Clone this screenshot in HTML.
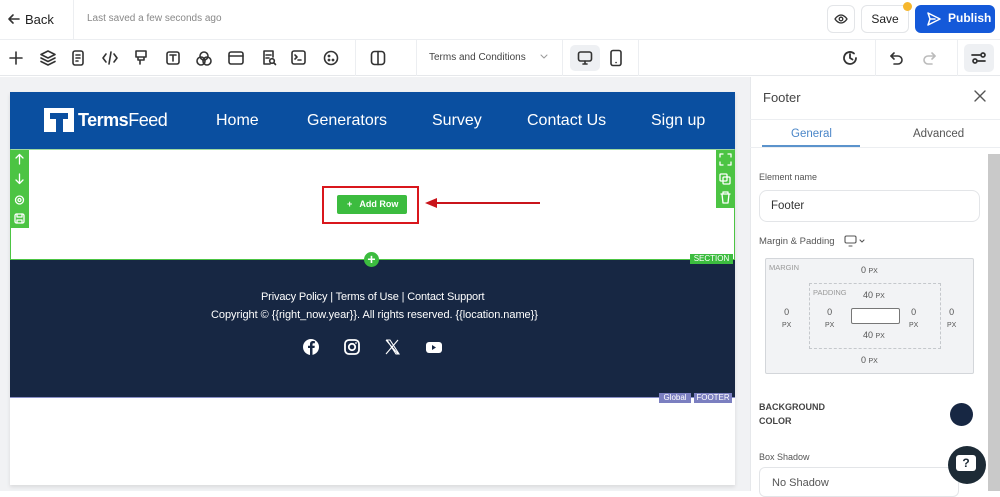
<!DOCTYPE html>
<html><head><meta charset="utf-8"><style>
*{box-sizing:border-box;margin:0;padding:0}
body{width:1000px;height:491px;overflow:hidden;font-family:"Liberation Sans",sans-serif;background:#fff;position:relative;color:#333}
.abs{position:absolute}
.ic{position:absolute;stroke:#333;fill:none;stroke-width:1.6;stroke-linecap:round;stroke-linejoin:round}
.w{stroke:#fff}
</style></head><body>
<!-- top bar -->
<div class="abs" style="left:0;top:0;width:1000px;height:40px;border-bottom:1px solid #eceef1"></div>
<svg class="ic" style="left:7px;top:12px" width="14" height="14" viewBox="0 0 14 14"><path d="M12 7H2M6 3L2 7l4 4"/></svg>
<div class="abs" style="left:25px;top:12px;font-size:13px;color:#222">Back</div>
<div class="abs" style="left:73px;top:0;width:1px;height:40px;background:#eceef1"></div>
<div class="abs" style="left:87px;top:13px;font-size:10px;color:#888">Last saved a few seconds ago</div>
<div class="abs" style="left:827px;top:5px;width:28px;height:28px;border:1px solid #e3e5e8;border-radius:6px"></div>
<svg class="ic" style="left:834px;top:12px;stroke-width:1.3" width="14" height="14" viewBox="0 0 14 14"><path d="M1 7s2.5-4 6-4 6 4 6 4-2.5 4-6 4-6-4-6-4z"/><circle cx="7" cy="7" r="1.8"/></svg>
<div class="abs" style="left:861px;top:5px;width:48px;height:28px;border:1px solid #e3e5e8;border-radius:6px;font-size:12px;text-align:center;line-height:27px;color:#222">Save</div>
<div class="abs" style="left:903px;top:2px;width:9px;height:9px;border-radius:50%;background:#f6b72d"></div>
<div class="abs" style="left:915px;top:5px;width:80px;height:28px;background:#1459d9;border-radius:6px;color:#fff;font-size:12px;font-weight:bold;line-height:27px;padding-left:33px">Publish</div>
<svg class="ic w" style="left:926px;top:11px;stroke-width:1.5" width="16" height="16" viewBox="0 0 16 16"><path d="M2 2l12 6-12 6 2-6zM4 8h5"/></svg>
<!-- toolbar -->
<div class="abs" style="left:0;top:40px;width:1000px;height:36px;border-bottom:1px solid #e6e8eb"></div>
<svg class="ic" style="left:0;top:48px" width="360" height="20" viewBox="0 0 360 20">
<path d="M16 4v12M10 10h12"/>
<path d="M48 3l7 3.5-7 3.5-7-3.5zM41 10l7 3.5 7-3.5M41 13.5l7 3.5 7-3.5"/>
<rect x="73" y="3" width="10" height="14" rx="2"/><path d="M76 7h4M76 10h4M76 13h2"/>
<path d="M106 6l-3 4 3 4M114 6l3 4-3 4M111 4l-2 12"/>
<path d="M136 3h10v6h-10zM138 9h6v3h-6zM140 12v4"/>
<rect x="167" y="4" width="12" height="12" rx="2"/><path d="M170 7h6M173 7v6"/>
<circle cx="204" cy="8" r="4"/><circle cx="201" cy="13" r="4"/><circle cx="207" cy="13" r="4"/>
<rect x="229" y="4" width="14" height="12" rx="2"/><path d="M229 8h14"/>
<path d="M270 16h-6V3h9v6"/><path d="M266 7h5M266 10h3"/><circle cx="272" cy="13" r="2.3"/><path d="M274 15l1.5 1.5"/>
<rect x="292" y="3" width="13" height="13" rx="2"/><path d="M295 7l2 2-2 2M298 12h3"/>
<circle cx="331" cy="10" r="6.5"/><circle cx="329" cy="8" r=".6"/><circle cx="333" cy="12" r=".6"/><circle cx="329" cy="12" r=".6"/>
</svg>
<div class="abs" style="left:355px;top:40px;width:1px;height:36px;background:#eceef1"></div>
<svg class="ic" style="left:370px;top:50px" width="16" height="16" viewBox="0 0 16 16"><rect x="1.5" y="1.5" width="13" height="13" rx="3"/><path d="M8 1.5v13"/></svg>
<div class="abs" style="left:416px;top:40px;width:1px;height:36px;background:#eceef1"></div>
<div class="abs" style="left:429px;top:52px;font-size:10px;color:#444">Terms and Conditions</div>
<svg class="ic" style="left:540px;top:54px;stroke:#999;stroke-width:1" width="8" height="6" viewBox="0 0 8 6"><path d="M1 1l3 3 3-3"/></svg>
<div class="abs" style="left:562px;top:40px;width:1px;height:36px;background:#eceef1"></div>
<div class="abs" style="left:570px;top:45px;width:30px;height:26px;border-radius:5px;background:#eef0f3"></div>
<svg class="ic" style="left:577px;top:50px" width="16" height="16" viewBox="0 0 16 16"><rect x="1.5" y="2" width="13" height="9" rx="2"/><path d="M6 14h4M8 11v3"/></svg>
<svg class="ic" style="left:608px;top:49px" width="16" height="18" viewBox="0 0 16 18"><rect x="3" y="1.5" width="10" height="15" rx="2"/><path d="M8 13.5h.1"/></svg>
<div class="abs" style="left:638px;top:40px;width:1px;height:36px;background:#eceef1"></div>
<svg class="ic" style="left:841px;top:49px;stroke-width:1.8" width="18" height="18" viewBox="0 0 18 18"><path d="M15 9a6 6 0 1 1-2-4.5"/><path d="M9 5v4l2.5 1.5"/></svg>
<div class="abs" style="left:875px;top:40px;width:1px;height:36px;background:#eceef1"></div>
<svg class="ic" style="left:889px;top:50px" width="16" height="16" viewBox="0 0 16 16"><path d="M5 3L2 6l3 3"/><path d="M2 6h7a4 4 0 0 1 0 8H5"/></svg>
<svg class="ic" style="left:921px;top:50px;stroke:#bbb" width="16" height="16" viewBox="0 0 16 16"><path d="M11 3l3 3-3 3"/><path d="M14 6H7a4 4 0 0 0 0 8h4"/></svg>
<div class="abs" style="left:957px;top:40px;width:1px;height:36px;background:#eceef1"></div>
<div class="abs" style="left:964px;top:44px;width:30px;height:28px;border-radius:5px;background:#eef0f3"></div>
<svg class="ic" style="left:970px;top:50px;stroke-width:1.7" width="18" height="16" viewBox="0 0 18 16"><path d="M2 5h8M15 11H8"/><circle cx="13" cy="5" r="2"/><circle cx="5" cy="11" r="2"/></svg>
<!-- canvas -->
<div class="abs" style="left:0;top:77px;width:750px;height:414px;background:#f1f2f4"></div>
<div class="abs" style="left:10px;top:92px;width:725px;height:393px;background:#fff;box-shadow:0 2px 4px rgba(0,0,0,.1)"></div>
<div class="abs" style="left:10px;top:92px;width:725px;height:57px;background:#0a4fa0"></div>
<div class="abs" style="left:44px;top:108px;width:30px;height:24px;background:#fff"></div>
<div class="abs" style="left:50px;top:113px;width:18px;height:6px;background:#0a4fa0"></div>
<div class="abs" style="left:56px;top:113px;width:7px;height:19px;background:#0a4fa0"></div>
<div class="abs" style="left:78px;top:110px;font-size:18px;color:#fff;letter-spacing:-.5px"><b>Terms</b>Feed</div>
<div class="abs" style="left:216px;top:112px;font-size:16px;color:#fff">Home</div>
<div class="abs" style="left:307px;top:112px;font-size:16px;color:#fff">Generators</div>
<div class="abs" style="left:432px;top:112px;font-size:16px;color:#fff">Survey</div>
<div class="abs" style="left:527px;top:112px;font-size:16px;color:#fff">Contact Us</div>
<div class="abs" style="left:651px;top:112px;font-size:16px;color:#fff">Sign up</div>
<!-- section -->
<div class="abs" style="left:10px;top:149px;width:725px;height:111px;border:1px solid #4cc443;border-top:1px solid #9fd9a0"></div>
<div class="abs" style="left:10px;top:150px;width:19px;height:78px;background:#4cc443"></div>
<svg class="ic w" style="left:12px;top:152px;stroke-width:1.3" width="15" height="74" viewBox="0 0 15 74"><path d="M7.5 3v9M4 6l3.5-3.5L11 6M7.5 22v9M4 28l3.5 3.5L11 28"/><circle cx="7.5" cy="48" r="4"/><circle cx="7.5" cy="48" r="1.5"/><rect x="3" y="62" width="9" height="9" rx="1.5"/><path d="M5 62v3h5v-3M5 71v-3h5v3"/></svg>
<div class="abs" style="left:716px;top:150px;width:19px;height:58px;background:#4cc443"></div>
<svg class="ic w" style="left:718px;top:152px;stroke-width:1.3" width="15" height="56" viewBox="0 0 15 56"><path d="M2 5V2h3M10 2h3v3M2 10v3h3M13 10v3h-3"/><rect x="2" y="22" width="7" height="7" rx="1"/><rect x="5" y="25" width="7" height="7" rx="1"/><path d="M3 42h9M5 42v-2h5v2M4 42l1 9h5l1-9"/></svg>
<div class="abs" style="left:322px;top:186px;width:97px;height:38px;border:2px solid #d9161c"></div>
<div class="abs" style="left:337px;top:195px;width:70px;height:19px;background:#3cbc3f;border-radius:2px;color:#fff;font-size:9px;font-weight:bold;line-height:19px;padding-left:10px">+&nbsp;&nbsp; Add Row</div>
<div class="abs" style="left:432px;top:202px;width:108px;height:2px;background:#c9141b"></div>
<svg class="abs" style="left:425px;top:197px" width="14" height="12"><path d="M0 6l12-5v10z" fill="#c9141b"/></svg>
<!-- footer -->
<div class="abs" style="left:10px;top:260px;width:725px;height:138px;background:#172743;border-bottom:1px solid #8a90c8"></div>
<div class="abs" style="left:364px;top:252px;width:15px;height:15px;border-radius:50%;background:#3cbc3f;color:#fff;font-size:14px;line-height:14px;text-align:center;font-weight:bold">+</div>
<div class="abs" style="left:690px;top:254px;width:43px;height:10px;background:#3cbc3f;color:#fff;font-size:8px;line-height:10px;text-align:center">SECTION</div>
<div class="abs" style="left:261px;top:291px;font-size:11px;color:#fff;letter-spacing:-.15px">Privacy Policy | Terms of Use | Contact Support</div>
<div class="abs" style="left:211px;top:309px;font-size:11px;color:#fff;letter-spacing:-.05px">Copyright © {{right_now.year}}. All rights reserved. {{location.name}}</div>
<svg class="abs" style="left:302px;top:338px" width="145" height="18" viewBox="0 0 145 18">
<circle cx="9" cy="9" r="8" fill="#fff"/><path d="M10.5 17V10h2l.3-2.3h-2.3V6.3c0-.7.2-1.1 1.1-1.1h1.3V3.1c-.3 0-1-.1-1.9-.1-1.9 0-3 1.1-3 3.1v1.6H6V10h2v7z" fill="#172743"/>
<rect x="43" y="2" width="14" height="14" rx="4" fill="none" stroke="#fff" stroke-width="1.8"/><circle cx="50" cy="9" r="3.2" fill="none" stroke="#fff" stroke-width="1.8"/><circle cx="54" cy="5" r=".9" fill="#fff"/>
<path d="M84 2l12 14M96 2L84 16M85 2h3l9 14h-3z" stroke="#fff" stroke-width="1.1" fill="none"/>
<rect x="124" y="4" width="16" height="11" rx="3" fill="#fff"/><path d="M130 7l4 2.5-4 2.5z" fill="#172743"/>
</svg>
<div class="abs" style="left:659px;top:393px;width:32px;height:10px;background:#7b7fc0;color:#fff;font-size:8px;line-height:10px;text-align:center">Global</div>
<div class="abs" style="left:694px;top:393px;width:38px;height:10px;background:#7b7fc0;color:#fff;font-size:8px;line-height:10px;text-align:center">FOOTER</div>
<!-- right panel -->
<div class="abs" style="left:750px;top:77px;width:250px;height:414px;background:#fff;border-left:1px solid #e6e8eb"></div>
<div class="abs" style="left:763px;top:90px;font-size:13px;color:#444">Footer</div>
<svg class="ic" style="left:974px;top:90px;stroke:#555;stroke-width:1.4" width="12" height="12" viewBox="0 0 12 12"><path d="M1 1l10 10M11 1L1 11"/></svg>
<div class="abs" style="left:750px;top:119px;width:250px;height:1px;background:#eceef1"></div>
<div class="abs" style="left:791px;top:128px;font-size:11.5px;color:#4a86c8">General</div>
<div class="abs" style="left:913px;top:128px;font-size:11.5px;color:#555">Advanced</div>
<div class="abs" style="left:762px;top:145px;width:98px;height:2px;background:#5b93cc"></div>
<div class="abs" style="left:750px;top:147px;width:250px;height:1px;background:#eceef1"></div>
<div class="abs" style="left:988px;top:154px;width:12px;height:337px;background:#c9c9c9"></div>
<div class="abs" style="left:759px;top:172px;font-size:9px;color:#555">Element name</div>
<div class="abs" style="left:759px;top:190px;width:221px;height:32px;border:1px solid #e3e5e8;border-radius:8px;font-size:11.5px;color:#333;padding:9px 0 0 11px">Footer</div>
<div class="abs" style="left:759px;top:236px;font-size:9.5px;color:#555">Margin &amp; Padding</div>
<svg class="ic" style="left:844px;top:235px;stroke:#555;stroke-width:1.1" width="22" height="12" viewBox="0 0 22 12"><rect x="1" y="1" width="11" height="7" rx="1.5"/><path d="M5 11h3M16 5l2 2 2-2"/></svg>
<div class="abs" style="left:765px;top:258px;width:209px;height:116px;background:#f2f3f5;border:1px solid #d3d6da;border-radius:2px"></div>
<div class="abs" style="left:769px;top:263px;font-size:7.5px;color:#999">MARGIN</div>
<div class="abs" style="left:809px;top:283px;width:132px;height:66px;border:1px dashed #c5c8cc"></div>
<div class="abs" style="left:813px;top:288px;font-size:7.5px;color:#999">PADDING</div>
<div class="abs" style="left:851px;top:308px;width:49px;height:16px;background:#fff;border:1px solid #777;border-radius:2px"></div>
<div class="abs" style="font-size:9px;color:#555;left:861px;top:265px">0 <span style="font-size:7px">PX</span></div>
<div class="abs" style="font-size:9px;color:#555;left:861px;top:355px">0 <span style="font-size:7px">PX</span></div>
<div class="abs" style="font-size:9px;color:#555;left:863px;top:290px">40 <span style="font-size:7px">PX</span></div>
<div class="abs" style="font-size:9px;color:#555;left:863px;top:330px">40 <span style="font-size:7px">PX</span></div>
<div class="abs" style="font-size:9px;color:#555;left:782px;top:306px;text-align:center;line-height:12px">0<br><span style="font-size:7px">PX</span></div>
<div class="abs" style="font-size:9px;color:#555;left:825px;top:306px;text-align:center;line-height:12px">0<br><span style="font-size:7px">PX</span></div>
<div class="abs" style="font-size:9px;color:#555;left:909px;top:306px;text-align:center;line-height:12px">0<br><span style="font-size:7px">PX</span></div>
<div class="abs" style="font-size:9px;color:#555;left:947px;top:306px;text-align:center;line-height:12px">0<br><span style="font-size:7px">PX</span></div>
<div class="abs" style="left:759px;top:400px;font-size:9px;font-weight:bold;color:#444;line-height:14px">BACKGROUND<br>COLOR</div>
<div class="abs" style="left:950px;top:403px;width:23px;height:23px;border-radius:50%;background:#172743"></div>
<div class="abs" style="left:759px;top:452px;font-size:9px;color:#555">Box Shadow</div>
<div class="abs" style="left:759px;top:467px;width:200px;height:30px;border:1px solid #e3e5e8;border-radius:6px;font-size:11px;color:#555;padding:9px 0 0 12px">No Shadow</div>
<div class="abs" style="left:948px;top:446px;width:38px;height:38px;border-radius:50%;background:#1d2b36"></div>
<div class="abs" style="left:956px;top:455px;width:20px;height:16px;background:#fff;border-radius:3px;font-size:12px;font-weight:bold;text-align:center;line-height:16px;color:#1d2b36">?</div>
</body></html>
